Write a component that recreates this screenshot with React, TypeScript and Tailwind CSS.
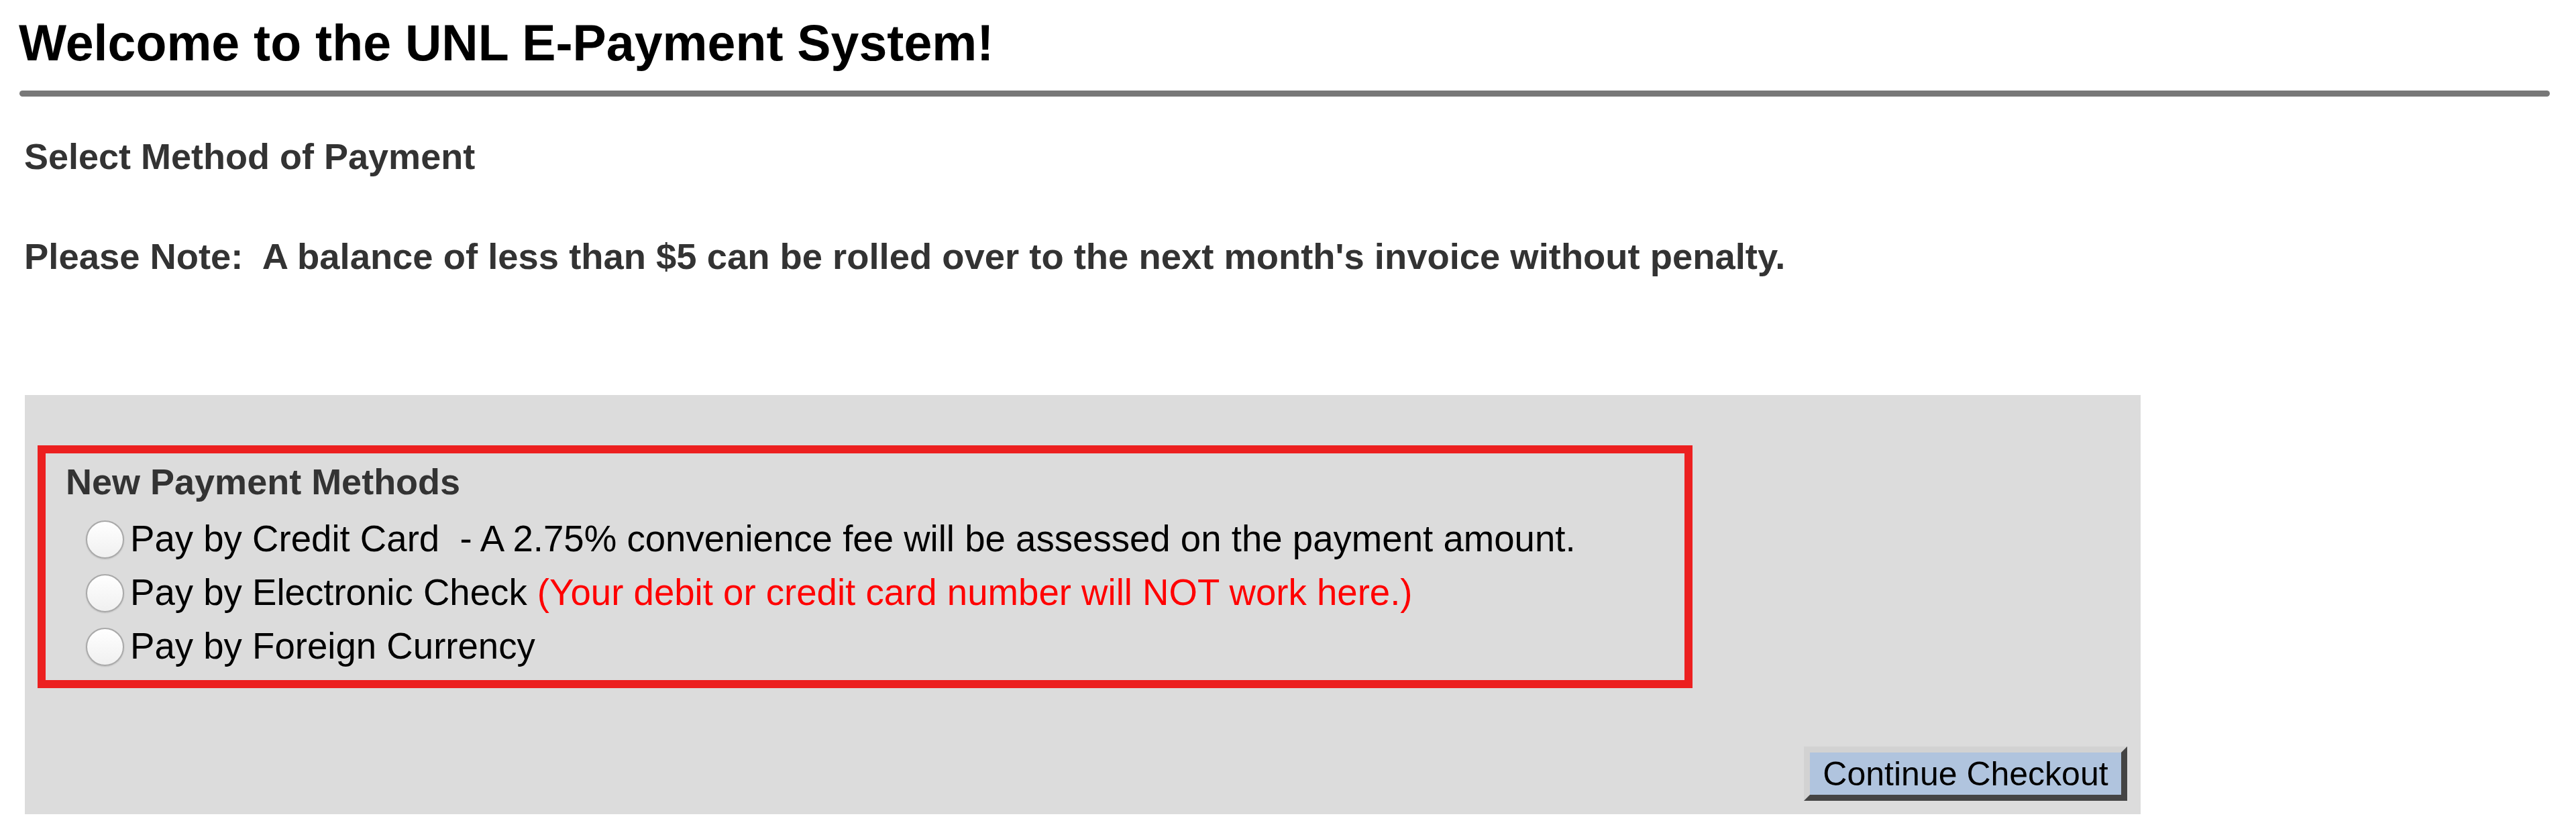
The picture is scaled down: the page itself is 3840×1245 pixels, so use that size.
import { useState } from "react";

const methods = [
  {
    id: "cc",
    label: "Pay by Credit Card  - A 2.75% convenience fee will be assessed on the payment amount.",
    note: "",
  },
  {
    id: "echeck",
    label: "Pay by Electronic Check ",
    note: "(Your debit or credit card number will NOT work here.)",
  },
  { id: "fx", label: "Pay by Foreign Currency", note: "" },
];

export default function App() {
  const [method, setMethod] = useState("");

  return (
    <div
      className="min-h-[1245px] bg-white pl-[28px] pr-[39px] pt-[21px] text-black"
      style={{ fontFamily: '"Liberation Sans", Arial, Helvetica, sans-serif' }}
    >
      <h1 className="text-[75.3px] font-bold leading-[86px]">
        Welcome to the UNL E-Payment System!
      </h1>
      <div className="ml-[1px] mt-[28px] h-[9px] rounded-full bg-[#787878]" />

      <div className="pl-[8px]">
        <div className="mt-[58px] text-[54px] font-bold leading-[62px] text-[#333]">
          Select Method of Payment
        </div>
        <div className="mt-[88px] whitespace-pre text-[54.4px] font-bold leading-[62px] text-[#333]">
          {"Please Note:  A balance of less than $5 can be rolled over to the next month's invoice without penalty."}
        </div>

        <div className="ml-[1px] mt-[175px] flex w-[3154px] flex-col bg-[#dcdcdc] pb-[20px] pl-[19px] pr-[20px] pt-[75px]">
          <div className="w-[2467px] border-[12px] border-[#ec2020] pb-[10px] pl-[30px] pt-[2px]">
            <div className="mb-[6px] text-[54px] font-bold leading-[80px] text-[#333]">
              New Payment Methods
            </div>
            {methods.map((m) => (
              <label key={m.id} className="flex h-[80px] items-center">
                <input
                  type="radio"
                  name="method"
                  checked={method === m.id}
                  onChange={() => setMethod(m.id)}
                  className="ml-[30px] h-[57px] w-[57px] shrink-0 appearance-none rounded-full border-2 border-[#a9a9a9] bg-linear-to-b from-white to-[#f0f0f0] shadow-[0_1px_2px_rgba(0,0,0,0.15)] checked:border-[#3b82f6]"
                />
                <span className="ml-[9px] whitespace-pre text-[54.6px] leading-[80px] text-black">
                  {m.label}
                  {m.note ? <span className="text-[#ff0000]">{m.note}</span> : null}
                </span>
              </label>
            ))}
          </div>

          <div className="mt-[87px] flex justify-end">
            <button
              type="button"
              className="flex h-[81px] w-[482px] items-center justify-center border-[9px] border-b-[#444] border-l-[#d2d2d2] border-r-[#444] border-t-[#d2d2d2] bg-[#b0c4de] text-[50px] leading-none text-black"
            >
              Continue Checkout
            </button>
          </div>
        </div>
      </div>
    </div>
  );
}
